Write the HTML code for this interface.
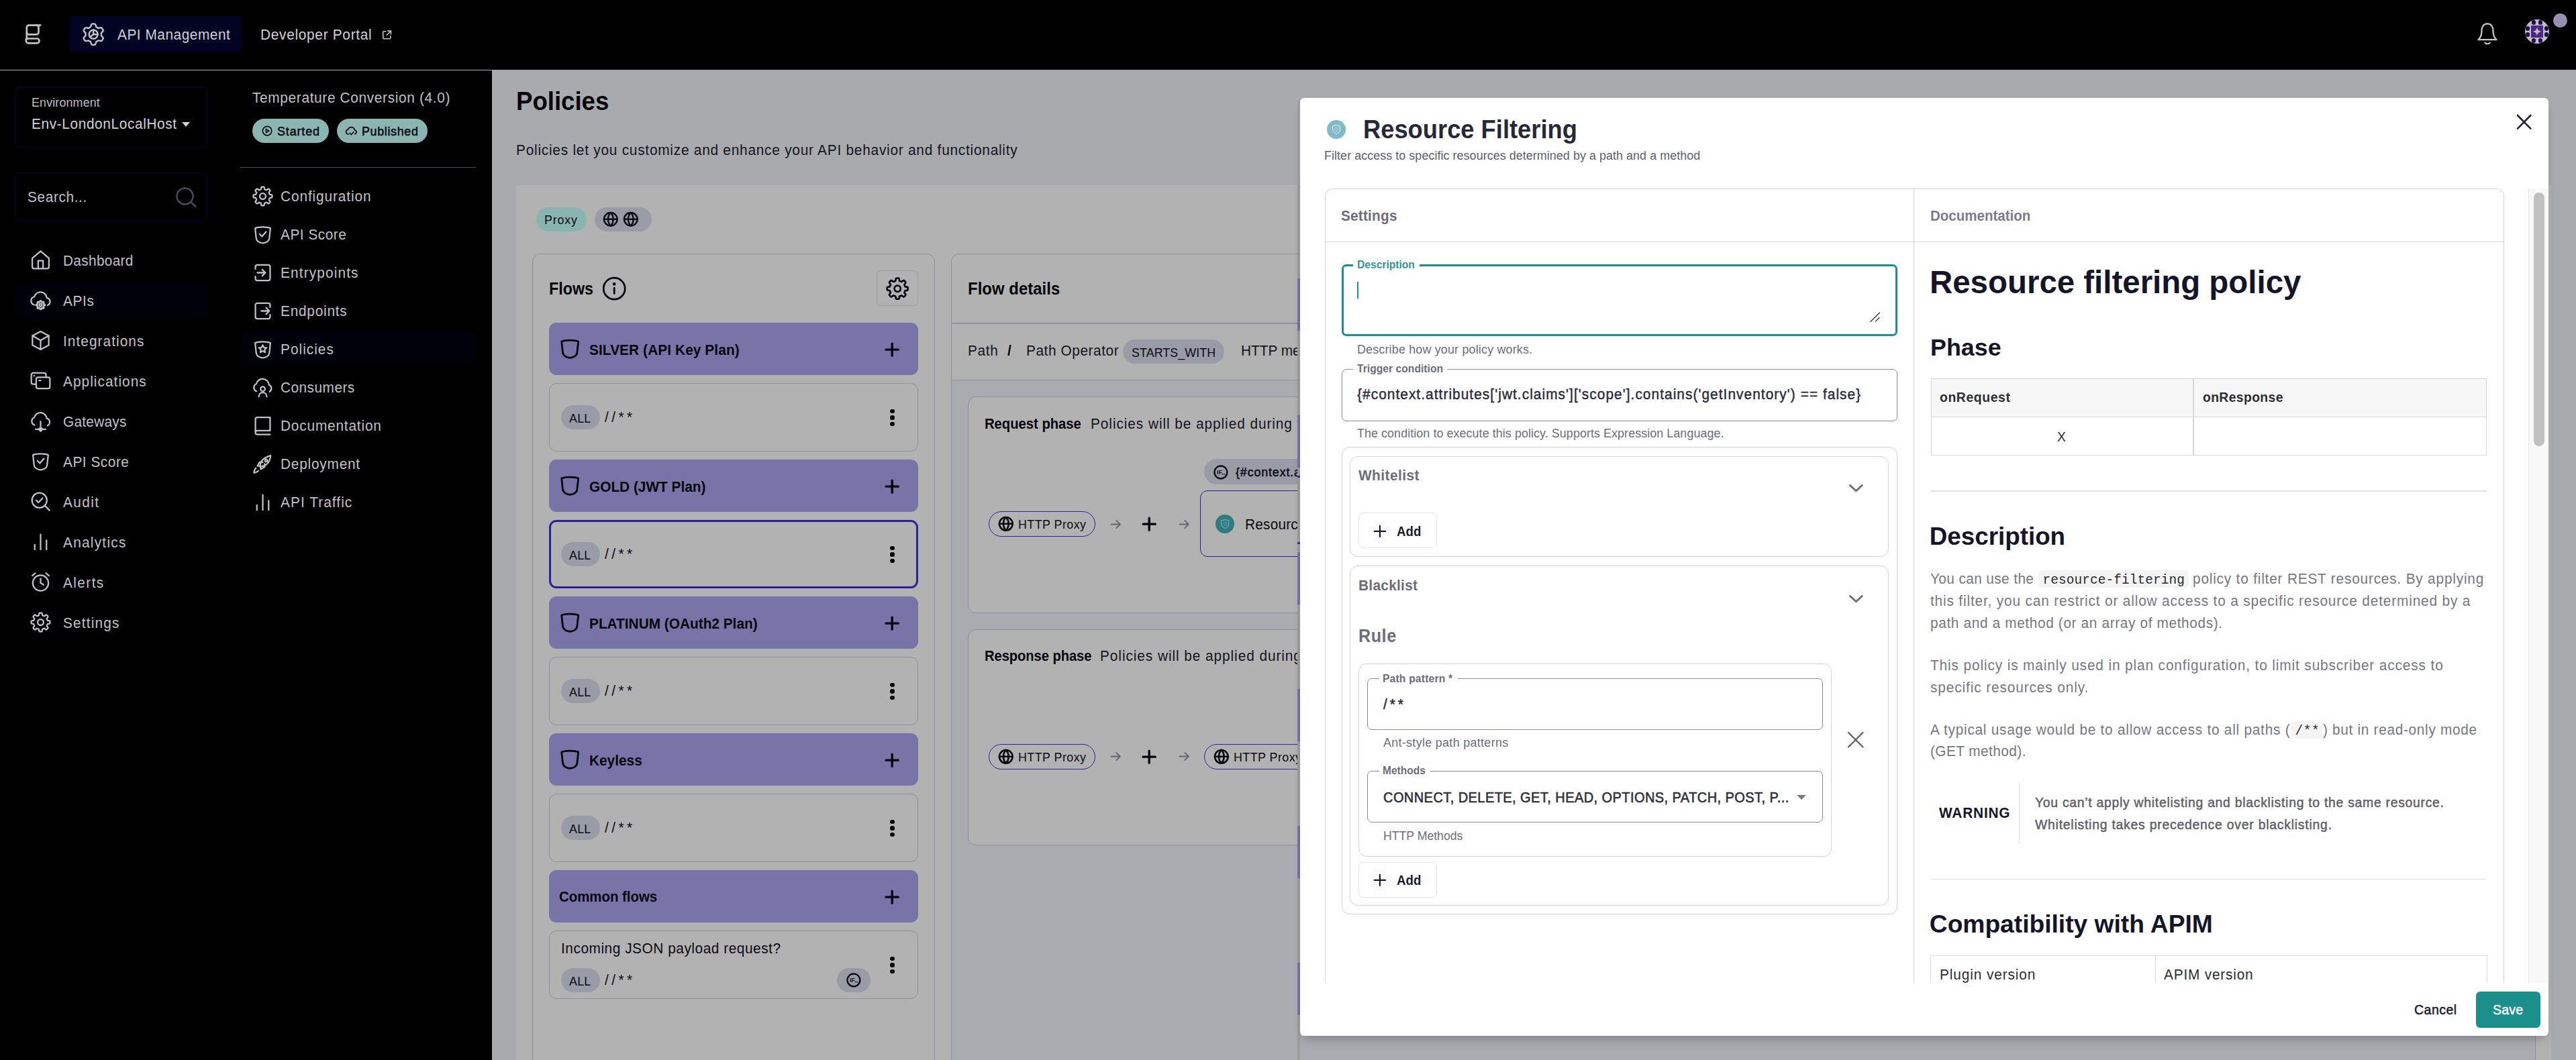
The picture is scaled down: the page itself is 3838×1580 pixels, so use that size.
<!DOCTYPE html>
<html lang="en"><head><meta charset="utf-8"><title>Policies</title><style>html,body{margin:0;padding:0}body{width:3838px;height:1580px;overflow:hidden;position:relative;background:#a9aaae;font-family:"Liberation Sans",sans-serif}
body div,body svg,body span.t{position:absolute;box-sizing:border-box}
span.t{white-space:pre;transform-origin:0 50%}
svg{overflow:visible}</style></head><body>
<div style="left:0.0px;top:0.0px;width:3838.0px;height:1580.0px;background:#a9aaae"></div>
<div style="left:768.9px;top:275.9px;width:3032.5px;height:1400.0px;background:#b2b2b2"></div>
<div style="left:0.0px;top:0.0px;width:3838.0px;height:104.0px;background:#000;border-bottom:1px solid #03031a"></div>
<svg style="left:30.0px;top:30.0px;width:40.0px;height:40.0px;" viewBox="0 0 40 40" fill="none" stroke="#c2c2c6" stroke-width="2.7" stroke-linecap="round" stroke-linejoin="round"><rect x="9.800" y="7.600" width="17.700" height="13.700" rx="3.200"/><path d="M24 7.600h6.200M9.800 18v7.500c0 1.200-.4 2-1 2.600"/><rect x="8.800" y="27.500" width="19.700" height="6.900" rx="3.450"/></svg>
<div style="left:103.3px;top:24.3px;width:257.7px;height:53.5px;background:#020222;border-radius:7px"></div>
<svg style="left:119.8px;top:31.7px;width:38.4px;height:38.4px;" viewBox="0 0 24 24" fill="none" stroke="#c4c4c8" stroke-width="1.5" stroke-linecap="round" stroke-linejoin="round"><path d="M19.30 12.00 L19.29 12.32 L19.27 12.64 L19.24 12.95 L19.44 13.31 L19.84 13.74 L20.26 14.21 L20.65 14.73 L20.97 15.27 L21.05 15.75 L20.88 16.14 L20.69 16.53 L20.49 16.90 L20.27 17.27 L20.03 17.62 L19.77 17.97 L19.32 18.14 L18.69 18.13 L18.05 18.05 L17.43 17.92 L16.85 17.78 L16.44 17.79 L16.19 17.98 L15.92 18.16 L15.65 18.32 L15.37 18.48 L15.09 18.62 L14.79 18.74 L14.58 19.09 L14.42 19.66 L14.21 20.26 L13.96 20.85 L13.66 21.40 L13.28 21.72 L12.85 21.76 L12.43 21.79 L12.00 21.80 L11.57 21.79 L11.15 21.76 L10.72 21.72 L10.34 21.40 L10.04 20.85 L9.79 20.26 L9.58 19.66 L9.42 19.09 L9.21 18.74 L8.91 18.62 L8.63 18.48 L8.35 18.32 L8.08 18.16 L7.81 17.98 L7.56 17.79 L7.15 17.78 L6.57 17.92 L5.95 18.05 L5.31 18.13 L4.68 18.14 L4.23 17.97 L3.97 17.62 L3.73 17.27 L3.51 16.90 L3.31 16.53 L3.12 16.14 L2.95 15.75 L3.03 15.27 L3.35 14.73 L3.74 14.21 L4.16 13.74 L4.56 13.31 L4.76 12.95 L4.73 12.64 L4.71 12.32 L4.70 12.00 L4.71 11.68 L4.73 11.36 L4.76 11.05 L4.56 10.69 L4.16 10.26 L3.74 9.79 L3.35 9.27 L3.03 8.73 L2.95 8.25 L3.12 7.86 L3.31 7.47 L3.51 7.10 L3.73 6.73 L3.97 6.38 L4.23 6.03 L4.68 5.86 L5.31 5.87 L5.95 5.95 L6.57 6.08 L7.15 6.22 L7.56 6.21 L7.81 6.02 L8.08 5.84 L8.35 5.68 L8.63 5.52 L8.91 5.38 L9.21 5.26 L9.42 4.91 L9.58 4.34 L9.79 3.74 L10.04 3.15 L10.34 2.60 L10.72 2.28 L11.15 2.24 L11.57 2.21 L12.00 2.20 L12.43 2.21 L12.85 2.24 L13.28 2.28 L13.66 2.60 L13.96 3.15 L14.21 3.74 L14.42 4.34 L14.58 4.91 L14.79 5.26 L15.09 5.38 L15.37 5.52 L15.65 5.68 L15.92 5.84 L16.19 6.02 L16.44 6.21 L16.85 6.22 L17.43 6.08 L18.05 5.95 L18.69 5.87 L19.32 5.86 L19.77 6.03 L20.03 6.38 L20.27 6.73 L20.49 7.10 L20.69 7.47 L20.88 7.86 L21.05 8.25 L20.97 8.73 L20.65 9.27 L20.26 9.79 L19.84 10.26 L19.44 10.69 L19.24 11.05 L19.27 11.36 L19.29 11.68Z"/><circle cx="12" cy="12" r="4.100"/><path d="M12 12V7.900M12 12l-3.300 2.600M12 12h4.100"/></svg>
<span class="t" style="left:175.0px;top:37.2px;font:400 22.4px/30px 'Liberation Sans', sans-serif;color:#d0d0d6;letter-spacing:0.57px;transform:scaleX(0.930);">API Management</span>
<span class="t" style="left:388.2px;top:37.2px;font:400 22.4px/30px 'Liberation Sans', sans-serif;color:#d0d0d6;letter-spacing:0.76px;transform:scaleX(0.930);">Developer Portal</span>
<svg style="left:568.0px;top:44.0px;width:16.5px;height:16.5px;" viewBox="0 0 24 24" fill="none" stroke="#c0c0c6" stroke-width="2.4" stroke-linecap="round" stroke-linejoin="round"><path d="M10 4H6a2 2 0 0 0-2 2v12a2 2 0 0 0 2 2h12a2 2 0 0 0 2-2v-4M14 3h7v7M21 3l-9 9"/></svg>
<svg style="left:3690.9px;top:34.4px;width:30.0px;height:33.0px;" viewBox="0 0 30 33" fill="none" stroke="#c4c4c8" stroke-width="2.3" stroke-linecap="round" stroke-linejoin="round"><path d="M1.500 25.200C5 22 6.500 18 6.500 11.500 6.500 5.200 10 1.300 15 1.300s8.500 3.900 8.500 10.200c0 6.500 1.500 10.500 5 13.700zM11.300 29.600c1.700 2.300 5.700 2.300 7.400 0"/></svg>
<div style="left:3762.0px;top:29.0px;width:36.0px;height:36.0px;background:#bdbdc0;border-radius:50%;overflow:hidden"><div style="left:9px;top:9px;width:18px;height:18px;background:#4f2583"></div><div style="left:10px;top:1px;width:6px;height:7px;border-radius:3px;background:#1e0b52"></div><div style="left:20px;top:1px;width:6px;height:7px;border-radius:3px;background:#1e0b52"></div><div style="left:10px;top:28px;width:6px;height:7px;border-radius:3px;background:#1e0b52"></div><div style="left:20px;top:28px;width:6px;height:7px;border-radius:3px;background:#1e0b52"></div><div style="left:1px;top:10px;width:6px;height:7px;border-radius:3px;background:#1e0b52"></div><div style="left:1px;top:19px;width:6px;height:7px;border-radius:3px;background:#1e0b52"></div><div style="left:29px;top:10px;width:6px;height:7px;border-radius:3px;background:#1e0b52"></div><div style="left:29px;top:19px;width:6px;height:7px;border-radius:3px;background:#1e0b52"></div><svg style="left:10px;top:10px;width:16px;height:16px" viewBox="0 0 16 16"><path d="M8 1C8.600 5.500 10.500 7.400 15 8 10.500 8.600 8.600 10.500 8 15 7.400 10.500 5.500 8.600 1 8 5.500 7.400 7.400 5.500 8 1z" fill="#bdbdc0" stroke="none"/></svg></div>
<div style="left:3804.0px;top:19.8px;width:21.2px;height:21.2px;background:#9790ae;border-radius:50%"></div>
<div style="left:0.0px;top:105.0px;width:733.0px;height:1475.0px;background:#000"></div>
<div style="left:22.4px;top:129.2px;width:287.0px;height:91.4px;border:2.4px solid #040420;border-radius:8px;background:#000"></div>
<span class="t" style="left:46.8px;top:139.7px;font:400 19.2px/25px 'Liberation Sans', sans-serif;color:#bcbcc4;letter-spacing:0.17px;transform:scaleX(0.930);">Environment</span>
<span class="t" style="left:46.7px;top:169.5px;font:400 22.4px/30px 'Liberation Sans', sans-serif;color:#d0d0d6;letter-spacing:0.67px;transform:scaleX(0.930);">Env-LondonLocalHost</span>
<div style="left:271.400px;top:181.500px;width:0;height:0;border-left:6.700px solid transparent;border-right:6.700px solid transparent;border-top:7.200px solid #d0d0d6"></div>
<div style="left:22.4px;top:257.2px;width:287.0px;height:72.6px;border:2.4px solid #040420;border-radius:8px;background:#000"></div>
<span class="t" style="left:41.1px;top:279.4px;font:400 22.4px/30px 'Liberation Sans', sans-serif;color:#c0c0c8;letter-spacing:0.66px;transform:scaleX(0.930);">Search...</span>
<svg style="left:261.0px;top:278.0px;width:32.0px;height:32.0px;" viewBox="0 0 32 32" fill="none" stroke="#474855" stroke-width="2.6" stroke-linecap="round" stroke-linejoin="round"><circle cx="14.500" cy="14.500" r="12"/><path d="M23.200 23.200 30.300 29.800"/></svg>
<div style="left:23.3px;top:421.8px;width:286.4px;height:52.0px;background:#010109;border-radius:7px"></div>
<svg style="left:43.2px;top:370.4px;width:35.0px;height:35.0px;" viewBox="0 0 24 24" fill="none" stroke="#c0c0c6" stroke-width="1.55" stroke-linecap="round" stroke-linejoin="round"><path d="M3.5 10.2 12 3l8.5 7.2V19a1.8 1.8 0 0 1-1.8 1.8H5.3A1.8 1.8 0 0 1 3.5 19z"/><path d="M9.5 20.8v-8h5v8"/></svg>
<span class="t" style="left:94.0px;top:374.1px;font:400 22.4px/30px 'Liberation Sans', sans-serif;color:#c0c0c6;letter-spacing:0.34px;transform:scaleX(0.930);">Dashboard</span>
<svg style="left:43.2px;top:430.4px;width:35.0px;height:35.0px;" viewBox="0 0 24 24" fill="none" stroke="#c0c0c6" stroke-width="1.55" stroke-linecap="round" stroke-linejoin="round"><path d="M5.8 16.8a4.3 4.3 0 0 1-.2-8.4A6.5 6.5 0 0 1 18.3 9.5a4 4 0 0 1 .9 7.6"/><path d="M16.40 17.00 L16.39 17.29 L16.36 17.57 L15.73 17.74 L15.09 17.83 L15.03 18.03 L14.96 18.22 L14.87 18.42 L14.77 18.60 L15.16 19.11 L15.49 19.68 L15.31 19.90 L15.11 20.11 L14.90 20.31 L14.68 20.49 L14.11 20.16 L13.60 19.77 L13.42 19.87 L13.22 19.96 L13.03 20.03 L12.83 20.09 L12.74 20.73 L12.57 21.36 L12.29 21.39 L12.00 21.40 L11.71 21.39 L11.43 21.36 L11.26 20.73 L11.17 20.09 L10.97 20.03 L10.78 19.96 L10.58 19.87 L10.40 19.77 L9.89 20.16 L9.32 20.49 L9.10 20.31 L8.89 20.11 L8.69 19.90 L8.51 19.68 L8.84 19.11 L9.23 18.60 L9.13 18.42 L9.04 18.22 L8.97 18.03 L8.91 17.83 L8.27 17.74 L7.64 17.57 L7.61 17.29 L7.60 17.00 L7.61 16.71 L7.64 16.43 L8.27 16.26 L8.91 16.17 L8.97 15.97 L9.04 15.78 L9.13 15.58 L9.23 15.40 L8.84 14.89 L8.51 14.32 L8.69 14.10 L8.89 13.89 L9.10 13.69 L9.32 13.51 L9.89 13.84 L10.40 14.23 L10.58 14.13 L10.78 14.04 L10.97 13.97 L11.17 13.91 L11.26 13.27 L11.43 12.64 L11.71 12.61 L12.00 12.60 L12.29 12.61 L12.57 12.64 L12.74 13.27 L12.83 13.91 L13.03 13.97 L13.22 14.04 L13.42 14.13 L13.60 14.23 L14.11 13.84 L14.68 13.51 L14.90 13.69 L15.11 13.89 L15.31 14.10 L15.49 14.32 L15.16 14.89 L14.77 15.40 L14.87 15.58 L14.96 15.78 L15.03 15.97 L15.09 16.17 L15.73 16.26 L16.36 16.43 L16.39 16.71Z"/><circle cx="12" cy="17" r="1.3"/></svg>
<span class="t" style="left:94.0px;top:434.1px;font:400 22.4px/30px 'Liberation Sans', sans-serif;color:#c0c0c6;letter-spacing:0.70px;transform:scaleX(0.930);">APIs</span>
<svg style="left:43.2px;top:490.4px;width:35.0px;height:35.0px;" viewBox="0 0 24 24" fill="none" stroke="#c0c0c6" stroke-width="1.55" stroke-linecap="round" stroke-linejoin="round"><path d="M12 2.8 20.3 7.2v9.6L12 21.2 3.7 16.8V7.2z"/><path d="M3.7 7.2 12 11.8l8.3-4.6M12 11.8v9.4"/></svg>
<span class="t" style="left:94.0px;top:494.1px;font:400 22.4px/30px 'Liberation Sans', sans-serif;color:#c0c0c6;letter-spacing:1.13px;transform:scaleX(0.930);">Integrations</span>
<svg style="left:43.2px;top:550.4px;width:35.0px;height:35.0px;" viewBox="0 0 24 24" fill="none" stroke="#c0c0c6" stroke-width="1.55" stroke-linecap="round" stroke-linejoin="round"><rect x="7.5" y="8.5" width="14" height="11.5" rx="2"/><path d="M17.5 8.5V6a2 2 0 0 0-2-2h-11a2 2 0 0 0-2 2v7.5a2 2 0 0 0 2 2h3"/><path d="M10.5 11.8h1.5M5.2 7h.3"/></svg>
<span class="t" style="left:94.0px;top:554.1px;font:400 22.4px/30px 'Liberation Sans', sans-serif;color:#c0c0c6;letter-spacing:1.12px;transform:scaleX(0.930);">Applications</span>
<svg style="left:43.2px;top:610.4px;width:35.0px;height:35.0px;" viewBox="0 0 24 24" fill="none" stroke="#c0c0c6" stroke-width="1.55" stroke-linecap="round" stroke-linejoin="round"><path d="M5.8 16.2a4.3 4.3 0 0 1-.2-8A6.5 6.5 0 0 1 18.3 9.3a4 4 0 0 1 .9 7.4"/><path d="M12 12.5v6M7 20.5h10M12 18.5l2 2-2 2-2-2z"/></svg>
<span class="t" style="left:94.0px;top:614.1px;font:400 22.4px/30px 'Liberation Sans', sans-serif;color:#c0c0c6;letter-spacing:0.28px;transform:scaleX(0.930);">Gateways</span>
<svg style="left:43.2px;top:670.4px;width:35.0px;height:35.0px;" viewBox="0 0 24 24" fill="none" stroke="#c0c0c6" stroke-width="1.55" stroke-linecap="round" stroke-linejoin="round"><path d="M4.2 5.6c3.2-1.6 12.4-1.6 15.6 0l-1.1 10.2c-.4 3.2-3.6 5-6.7 5s-6.3-1.8-6.7-5z"/><path d="M8.8 11.5l2.4 2.6 4.2-4.8"/></svg>
<span class="t" style="left:94.0px;top:674.1px;font:400 22.4px/30px 'Liberation Sans', sans-serif;color:#c0c0c6;letter-spacing:0.56px;transform:scaleX(0.930);">API Score</span>
<svg style="left:43.2px;top:730.4px;width:35.0px;height:35.0px;" viewBox="0 0 24 24" fill="none" stroke="#c0c0c6" stroke-width="1.55" stroke-linecap="round" stroke-linejoin="round"><circle cx="10.8" cy="10.8" r="7.6"/><path d="M16.4 16.4 21 21M7.6 10.8l2.2 2.2 4.2-4.4"/></svg>
<span class="t" style="left:94.0px;top:734.1px;font:400 22.4px/30px 'Liberation Sans', sans-serif;color:#c0c0c6;letter-spacing:1.50px;transform:scaleX(0.930);">Audit</span>
<svg style="left:43.2px;top:790.4px;width:35.0px;height:35.0px;" viewBox="0 0 24 24" fill="none" stroke="#c0c0c6" stroke-width="1.55" stroke-linecap="round" stroke-linejoin="round"><path d="M6 20v-5M12 20V4.5M18 20v-9.5"/></svg>
<span class="t" style="left:94.0px;top:794.1px;font:400 22.4px/30px 'Liberation Sans', sans-serif;color:#c0c0c6;letter-spacing:1.35px;transform:scaleX(0.930);">Analytics</span>
<svg style="left:43.2px;top:850.4px;width:35.0px;height:35.0px;" viewBox="0 0 24 24" fill="none" stroke="#c0c0c6" stroke-width="1.55" stroke-linecap="round" stroke-linejoin="round"><circle cx="12" cy="13" r="8"/><path d="M12 8.5V13l3 1.8M3.5 5.5 6.5 3M20.5 5.5 17.5 3"/></svg>
<span class="t" style="left:94.0px;top:854.1px;font:400 22.4px/30px 'Liberation Sans', sans-serif;color:#c0c0c6;letter-spacing:1.51px;transform:scaleX(0.930);">Alerts</span>
<svg style="left:43.2px;top:910.4px;width:35.0px;height:35.0px;" viewBox="0 0 24 24" fill="none" stroke="#c0c0c6" stroke-width="1.55" stroke-linecap="round" stroke-linejoin="round"><path d="M21.60 12.00 L21.59 12.47 L21.55 12.94 L21.31 13.38 L20.24 13.64 L19.17 13.80 L18.89 14.09 L18.78 14.43 L18.65 14.76 L18.51 15.08 L18.35 15.39 L18.34 15.80 L18.98 16.67 L19.56 17.61 L19.42 18.09 L19.11 18.45 L18.79 18.79 L18.45 19.11 L18.09 19.42 L17.61 19.56 L16.67 18.98 L15.80 18.34 L15.39 18.35 L15.08 18.51 L14.76 18.65 L14.43 18.78 L14.09 18.89 L13.80 19.17 L13.64 20.24 L13.38 21.31 L12.94 21.55 L12.47 21.59 L12.00 21.60 L11.53 21.59 L11.06 21.55 L10.62 21.31 L10.36 20.24 L10.20 19.17 L9.91 18.89 L9.57 18.78 L9.24 18.65 L8.92 18.51 L8.61 18.35 L8.20 18.34 L7.33 18.98 L6.39 19.56 L5.91 19.42 L5.55 19.11 L5.21 18.79 L4.89 18.45 L4.58 18.09 L4.44 17.61 L5.02 16.67 L5.66 15.80 L5.65 15.39 L5.49 15.08 L5.35 14.76 L5.22 14.43 L5.11 14.09 L4.83 13.80 L3.76 13.64 L2.69 13.38 L2.45 12.94 L2.41 12.47 L2.40 12.00 L2.41 11.53 L2.45 11.06 L2.69 10.62 L3.76 10.36 L4.83 10.20 L5.11 9.91 L5.22 9.57 L5.35 9.24 L5.49 8.92 L5.65 8.61 L5.66 8.20 L5.02 7.33 L4.44 6.39 L4.58 5.91 L4.89 5.55 L5.21 5.21 L5.55 4.89 L5.91 4.58 L6.39 4.44 L7.33 5.02 L8.20 5.66 L8.61 5.65 L8.92 5.49 L9.24 5.35 L9.57 5.22 L9.91 5.11 L10.20 4.83 L10.36 3.76 L10.62 2.69 L11.06 2.45 L11.53 2.41 L12.00 2.40 L12.47 2.41 L12.94 2.45 L13.38 2.69 L13.64 3.76 L13.80 4.83 L14.09 5.11 L14.43 5.22 L14.76 5.35 L15.08 5.49 L15.39 5.65 L15.80 5.66 L16.67 5.02 L17.61 4.44 L18.09 4.58 L18.45 4.89 L18.79 5.21 L19.11 5.55 L19.42 5.91 L19.56 6.39 L18.98 7.33 L18.34 8.20 L18.35 8.61 L18.51 8.92 L18.65 9.24 L18.78 9.57 L18.89 9.91 L19.17 10.20 L20.24 10.36 L21.31 10.62 L21.55 11.06 L21.59 11.53Z"/><circle cx="12" cy="12" r="3.0"/></svg>
<span class="t" style="left:94.0px;top:914.1px;font:400 22.4px/30px 'Liberation Sans', sans-serif;color:#c0c0c6;letter-spacing:1.26px;transform:scaleX(0.930);">Settings</span>
<span class="t" style="left:375.8px;top:131.3px;font:400 22.4px/30px 'Liberation Sans', sans-serif;color:#c0c0c6;letter-spacing:0.71px;transform:scaleX(0.930);">Temperature Conversion (4.0)</span>
<div style="left:376.0px;top:177.1px;width:114.0px;height:35.8px;background:#8ab5b1;border-radius:18px"></div>
<svg style="left:389.7px;top:186.9px;width:16.2px;height:16.2px;" viewBox="0 0 24 24" fill="none" stroke="#0b0b14" stroke-width="2.4" stroke-linecap="round" stroke-linejoin="round"><circle cx="12" cy="12" r="10"/><path d="M9.500 8v8l6.500-4z"/></svg>
<span class="t" style="left:412.9px;top:183.3px;font:400 19.2px/25px 'Liberation Sans', sans-serif;color:#0b0b14;letter-spacing:0.97px;transform:scaleX(0.930);-webkit-text-stroke:.6px #0b0b14;">Started</span>
<div style="left:501.8px;top:177.1px;width:135.1px;height:35.8px;background:#8ab5b1;border-radius:18px"></div>
<svg style="left:513.6px;top:185.9px;width:18.7px;height:18.7px;" viewBox="0 0 24 24" fill="none" stroke="#0b0b14" stroke-width="2.2" stroke-linecap="round" stroke-linejoin="round"><path d="M7 18h-.500a4.500 4.500 0 0 1-.600-8.960A6.500 6.500 0 0 1 18.500 10 4 4 0 0 1 19 17.800M9.500 16l2.500 3 4.500-5"/></svg>
<span class="t" style="left:538.7px;top:183.3px;font:400 19.2px/25px 'Liberation Sans', sans-serif;color:#0b0b14;letter-spacing:0.74px;transform:scaleX(0.930);-webkit-text-stroke:.6px #0b0b14;">Published</span>
<div style="left:358.0px;top:248.5px;width:351.1px;height:1.6px;background:#4a4b58"></div>
<div style="left:358.6px;top:493.4px;width:350.5px;height:52.0px;background:#010109;border-radius:7px"></div>
<svg style="left:373.5px;top:274.5px;width:35.0px;height:35.0px;" viewBox="0 0 24 24" fill="none" stroke="#c0c0c6" stroke-width="1.55" stroke-linecap="round" stroke-linejoin="round"><path d="M21.60 12.00 L21.59 12.47 L21.55 12.94 L21.31 13.38 L20.24 13.64 L19.17 13.80 L18.89 14.09 L18.78 14.43 L18.65 14.76 L18.51 15.08 L18.35 15.39 L18.34 15.80 L18.98 16.67 L19.56 17.61 L19.42 18.09 L19.11 18.45 L18.79 18.79 L18.45 19.11 L18.09 19.42 L17.61 19.56 L16.67 18.98 L15.80 18.34 L15.39 18.35 L15.08 18.51 L14.76 18.65 L14.43 18.78 L14.09 18.89 L13.80 19.17 L13.64 20.24 L13.38 21.31 L12.94 21.55 L12.47 21.59 L12.00 21.60 L11.53 21.59 L11.06 21.55 L10.62 21.31 L10.36 20.24 L10.20 19.17 L9.91 18.89 L9.57 18.78 L9.24 18.65 L8.92 18.51 L8.61 18.35 L8.20 18.34 L7.33 18.98 L6.39 19.56 L5.91 19.42 L5.55 19.11 L5.21 18.79 L4.89 18.45 L4.58 18.09 L4.44 17.61 L5.02 16.67 L5.66 15.80 L5.65 15.39 L5.49 15.08 L5.35 14.76 L5.22 14.43 L5.11 14.09 L4.83 13.80 L3.76 13.64 L2.69 13.38 L2.45 12.94 L2.41 12.47 L2.40 12.00 L2.41 11.53 L2.45 11.06 L2.69 10.62 L3.76 10.36 L4.83 10.20 L5.11 9.91 L5.22 9.57 L5.35 9.24 L5.49 8.92 L5.65 8.61 L5.66 8.20 L5.02 7.33 L4.44 6.39 L4.58 5.91 L4.89 5.55 L5.21 5.21 L5.55 4.89 L5.91 4.58 L6.39 4.44 L7.33 5.02 L8.20 5.66 L8.61 5.65 L8.92 5.49 L9.24 5.35 L9.57 5.22 L9.91 5.11 L10.20 4.83 L10.36 3.76 L10.62 2.69 L11.06 2.45 L11.53 2.41 L12.00 2.40 L12.47 2.41 L12.94 2.45 L13.38 2.69 L13.64 3.76 L13.80 4.83 L14.09 5.11 L14.43 5.22 L14.76 5.35 L15.08 5.49 L15.39 5.65 L15.80 5.66 L16.67 5.02 L17.61 4.44 L18.09 4.58 L18.45 4.89 L18.79 5.21 L19.11 5.55 L19.42 5.91 L19.56 6.39 L18.98 7.33 L18.34 8.20 L18.35 8.61 L18.51 8.92 L18.65 9.24 L18.78 9.57 L18.89 9.91 L19.17 10.20 L20.24 10.36 L21.31 10.62 L21.55 11.06 L21.59 11.53Z"/><circle cx="12" cy="12" r="3.0"/></svg>
<span class="t" style="left:417.8px;top:277.9px;font:400 22.4px/30px 'Liberation Sans', sans-serif;color:#c0c0c6;letter-spacing:0.96px;transform:scaleX(0.930);">Configuration</span>
<svg style="left:373.5px;top:331.5px;width:35.0px;height:35.0px;" viewBox="0 0 24 24" fill="none" stroke="#c0c0c6" stroke-width="1.55" stroke-linecap="round" stroke-linejoin="round"><path d="M4.2 5.6c3.2-1.6 12.4-1.6 15.6 0l-1.1 10.2c-.4 3.2-3.6 5-6.7 5s-6.3-1.8-6.7-5z"/><path d="M8.8 11.5l2.4 2.6 4.2-4.8"/></svg>
<span class="t" style="left:417.8px;top:334.9px;font:400 22.4px/30px 'Liberation Sans', sans-serif;color:#c0c0c6;letter-spacing:0.55px;transform:scaleX(0.930);">API Score</span>
<svg style="left:373.5px;top:388.5px;width:35.0px;height:35.0px;" viewBox="0 0 24 24" fill="none" stroke="#c0c0c6" stroke-width="1.55" stroke-linecap="round" stroke-linejoin="round"><path d="M4.500 8.200V6a2 2 0 0 1 2-2h11a2 2 0 0 1 2 2v12a2 2 0 0 1-2 2h-11a2 2 0 0 1-2-2v-2.200"/><path d="M6.500 12h8M11.500 8.800l3.200 3.200-3.200 3.200"/></svg>
<span class="t" style="left:417.8px;top:391.9px;font:400 22.4px/30px 'Liberation Sans', sans-serif;color:#c0c0c6;letter-spacing:1.22px;transform:scaleX(0.930);">Entrypoints</span>
<svg style="left:373.5px;top:445.5px;width:35.0px;height:35.0px;" viewBox="0 0 24 24" fill="none" stroke="#c0c0c6" stroke-width="1.55" stroke-linecap="round" stroke-linejoin="round"><path d="M19.500 8.200V6a2 2 0 0 0-2-2h-11a2 2 0 0 0-2 2v12a2 2 0 0 0 2 2h11a2 2 0 0 0 2-2v-2.200"/><path d="M10.500 12h8M15.500 8.800l3.200 3.200-3.200 3.200"/></svg>
<span class="t" style="left:417.8px;top:448.9px;font:400 22.4px/30px 'Liberation Sans', sans-serif;color:#c0c0c6;letter-spacing:0.82px;transform:scaleX(0.930);">Endpoints</span>
<svg style="left:373.5px;top:502.5px;width:35.0px;height:35.0px;" viewBox="0 0 24 24" fill="none" stroke="#c0c0c6" stroke-width="1.55" stroke-linecap="round" stroke-linejoin="round"><path d="M4.2 5.6c3.2-1.6 12.4-1.6 15.6 0l-1.1 10.2c-.4 3.2-3.6 5-6.7 5s-6.3-1.8-6.7-5z"/><path d="M12 7.8l1.200 2.500 2.700.300-2 1.900.600 2.700L12 13.800l-2.500 1.400.600-2.700-2-1.900 2.700-.300z"/></svg>
<span class="t" style="left:417.8px;top:505.9px;font:400 22.4px/30px 'Liberation Sans', sans-serif;color:#c0c0c6;letter-spacing:1.09px;transform:scaleX(0.930);">Policies</span>
<svg style="left:373.5px;top:559.5px;width:35.0px;height:35.0px;" viewBox="0 0 24 24" fill="none" stroke="#c0c0c6" stroke-width="1.55" stroke-linecap="round" stroke-linejoin="round"><path d="M5.500 16a4.300 4.300 0 0 1 0-7.800A6.500 6.500 0 0 1 18.300 9.300a4 4 0 0 1 .700 7"/><circle cx="12" cy="13.500" r="2.300"/><path d="M8 21.500c0-2.700 1.800-4.200 4-4.200s4 1.500 4 4.200"/></svg>
<span class="t" style="left:417.8px;top:562.9px;font:400 22.4px/30px 'Liberation Sans', sans-serif;color:#c0c0c6;letter-spacing:0.51px;transform:scaleX(0.930);">Consumers</span>
<svg style="left:373.5px;top:616.5px;width:35.0px;height:35.0px;" viewBox="0 0 24 24" fill="none" stroke="#c0c0c6" stroke-width="1.55" stroke-linecap="round" stroke-linejoin="round"><path d="M4.500 18.500V5.500a2 2 0 0 1 2-2h13v13.500h-13a2 2 0 0 0 0 4h13"/></svg>
<span class="t" style="left:417.8px;top:619.9px;font:400 22.4px/30px 'Liberation Sans', sans-serif;color:#c0c0c6;letter-spacing:0.88px;transform:scaleX(0.930);">Documentation</span>
<svg style="left:373.5px;top:673.5px;width:35.0px;height:35.0px;" viewBox="0 0 24 24" fill="none" stroke="#c0c0c6" stroke-width="1.55" stroke-linecap="round" stroke-linejoin="round"><path d="M9.500 14.500c-.500-3.500 2-9 10.500-11-.800 8-6 11.500-10.500 11zM9.500 14.500l-3-.500 2.500-4 3 .200M9.500 14.500l.500 3 4-2.500-.200-3M5 16.500c-1.500 1-2 4-2 4.500 .500 0 3.500-.500 4.500-2"/><circle cx="15.500" cy="8.500" r="1.200"/></svg>
<span class="t" style="left:417.8px;top:676.9px;font:400 22.4px/30px 'Liberation Sans', sans-serif;color:#c0c0c6;letter-spacing:0.84px;transform:scaleX(0.930);">Deployment</span>
<svg style="left:373.5px;top:730.5px;width:35.0px;height:35.0px;" viewBox="0 0 24 24" fill="none" stroke="#c0c0c6" stroke-width="1.55" stroke-linecap="round" stroke-linejoin="round"><path d="M6 20v-5M12 20V4.5M18 20v-9.5"/></svg>
<span class="t" style="left:417.8px;top:733.9px;font:400 22.4px/30px 'Liberation Sans', sans-serif;color:#c0c0c6;letter-spacing:1.14px;transform:scaleX(0.930);">API Traffic</span>
<span class="t" style="left:769.0px;top:125.9px;font:700 38.4px/50px 'Liberation Sans', sans-serif;color:#05050c;transform:scaleX(0.953);">Policies</span>
<span class="t" style="left:768.9px;top:208.8px;font:400 22.4px/30px 'Liberation Sans', sans-serif;color:#14141f;letter-spacing:0.82px;transform:scaleX(0.930);">Policies let you customize and enhance your API behavior and functionality</span>
<div style="left:799.1px;top:309.2px;width:74.7px;height:35.8px;background:#89b5b1;border-radius:18px"></div>
<span class="t" style="left:811.4px;top:315.1px;font:400 19.2px/25px 'Liberation Sans', sans-serif;color:#0b0b14;letter-spacing:0.92px;transform:scaleX(0.930);">Proxy</span>
<div style="left:886.0px;top:309.2px;width:84.9px;height:35.8px;background:#999ba6;border-radius:18px"></div>
<svg style="left:897.1px;top:314.2px;width:25.6px;height:25.6px;" viewBox="0 0 24 24" fill="none" stroke="#0b0b14" stroke-width="2.3" stroke-linecap="round" stroke-linejoin="round"><circle cx="12" cy="12" r="9.200"/><path d="M2.800 12h18.400M12 2.800c-4.800 5-4.800 13.400 0 18.400M12 2.800c4.800 5 4.800 13.400 0 18.400"/></svg>
<svg style="left:927.3px;top:314.2px;width:25.6px;height:25.6px;" viewBox="0 0 24 24" fill="none" stroke="#0b0b14" stroke-width="2.3" stroke-linecap="round" stroke-linejoin="round"><circle cx="12" cy="12" r="9.200"/><path d="M2.800 12h18.400M12 2.800c-4.800 5-4.800 13.400 0 18.400M12 2.800c4.800 5 4.800 13.400 0 18.400"/></svg>
<div style="left:793.1px;top:378.4px;width:599.5px;height:1300.0px;border:1.6px solid #8e8f9b;border-radius:12px"></div>
<span class="t" style="left:817.9px;top:413.1px;font:700 25.6px/34px 'Liberation Sans', sans-serif;color:#05050c;transform:scaleX(0.909);">Flows</span>
<svg style="left:895.8px;top:410.9px;width:38.4px;height:38.4px;" viewBox="0 0 24 24" fill="none" stroke="#05050c" stroke-width="1.7" stroke-linecap="round" stroke-linejoin="round"><circle cx="12" cy="12" r="10"/><path d="M12 11.300v5.200"/><circle cx="12" cy="7.700" r=".600" fill="#000"/></svg>
<div style="left:1306.1px;top:403.3px;width:61.6px;height:53.2px;border:1.6px solid #9c9da8;border-radius:7px"></div>
<svg style="left:1318.1px;top:411.3px;width:38.4px;height:38.4px;" viewBox="0 0 24 24" fill="none" stroke="#05050c" stroke-width="1.7" stroke-linecap="round" stroke-linejoin="round"><path d="M21.70 12.00 L21.69 12.48 L21.65 12.95 L21.41 13.40 L20.34 13.66 L19.27 13.82 L18.99 14.12 L18.87 14.46 L18.74 14.79 L18.60 15.12 L18.44 15.44 L18.42 15.85 L19.07 16.72 L19.64 17.67 L19.50 18.15 L19.19 18.51 L18.86 18.86 L18.51 19.19 L18.15 19.50 L17.67 19.64 L16.72 19.07 L15.85 18.42 L15.44 18.44 L15.12 18.60 L14.79 18.74 L14.46 18.87 L14.12 18.99 L13.82 19.27 L13.66 20.34 L13.40 21.41 L12.95 21.65 L12.48 21.69 L12.00 21.70 L11.52 21.69 L11.05 21.65 L10.60 21.41 L10.34 20.34 L10.18 19.27 L9.88 18.99 L9.54 18.87 L9.21 18.74 L8.88 18.60 L8.56 18.44 L8.15 18.42 L7.28 19.07 L6.33 19.64 L5.85 19.50 L5.49 19.19 L5.14 18.86 L4.81 18.51 L4.50 18.15 L4.36 17.67 L4.93 16.72 L5.58 15.85 L5.56 15.44 L5.40 15.12 L5.26 14.79 L5.13 14.46 L5.01 14.12 L4.73 13.82 L3.66 13.66 L2.59 13.40 L2.35 12.95 L2.31 12.48 L2.30 12.00 L2.31 11.52 L2.35 11.05 L2.59 10.60 L3.66 10.34 L4.73 10.18 L5.01 9.88 L5.13 9.54 L5.26 9.21 L5.40 8.88 L5.56 8.56 L5.58 8.15 L4.93 7.28 L4.36 6.33 L4.50 5.85 L4.81 5.49 L5.14 5.14 L5.49 4.81 L5.85 4.50 L6.33 4.36 L7.28 4.93 L8.15 5.58 L8.56 5.56 L8.88 5.40 L9.21 5.26 L9.54 5.13 L9.88 5.01 L10.18 4.73 L10.34 3.66 L10.60 2.59 L11.05 2.35 L11.52 2.31 L12.00 2.30 L12.48 2.31 L12.95 2.35 L13.40 2.59 L13.66 3.66 L13.82 4.73 L14.12 5.01 L14.46 5.13 L14.79 5.26 L15.12 5.40 L15.44 5.56 L15.85 5.58 L16.72 4.93 L17.67 4.36 L18.15 4.50 L18.51 4.81 L18.86 5.14 L19.19 5.49 L19.50 5.85 L19.64 6.33 L19.07 7.28 L18.42 8.15 L18.44 8.56 L18.60 8.88 L18.74 9.21 L18.87 9.54 L18.99 9.88 L19.27 10.18 L20.34 10.34 L21.41 10.60 L21.65 11.05 L21.69 11.52Z"/><circle cx="12" cy="12" r="2.9"/></svg>
<div style="left:818.0px;top:481.1px;width:549.7px;height:77.5px;background:#7974a7;border-radius:11px"></div>
<svg style="left:830.2px;top:500.4px;width:38.4px;height:38.4px;" viewBox="0 0 24 24" fill="none" stroke="#05050c" stroke-width="1.75" stroke-linecap="round" stroke-linejoin="round"><path d="M4.2 5.6c3.2-1.6 12.4-1.6 15.6 0l-1.1 10.2c-.4 3.2-3.6 5-6.7 5s-6.3-1.8-6.7-5z"/></svg>
<span class="t" style="left:877.5px;top:506.9px;font:700 22.4px/30px 'Liberation Sans', sans-serif;color:#05050c;letter-spacing:0.10px;transform:scaleX(0.930);">SILVER (API Key Plan)</span>
<svg style="left:1310.2px;top:501.8px;width:38.4px;height:38.4px;" viewBox="0 0 24 24" fill="none" stroke="#05050c" stroke-width="2.1" stroke-linecap="round" stroke-linejoin="round"><path d="M12 6.300v11.400M6.300 12h11.400"/></svg>
<div style="left:818.0px;top:571.0px;width:549.7px;height:102.2px;border:1.6px solid #8e8f9b;border-radius:11px"></div>
<div style="left:836.0px;top:604.1px;width:57.6px;height:35.5px;background:#999ba6;border-radius:18px"></div>
<span class="t" style="left:848.3px;top:610.6px;font:400 19.2px/25px 'Liberation Sans', sans-serif;color:#0b0b14;letter-spacing:0.27px;transform:scaleX(0.930);">ALL</span>
<span class="t" style="left:900.5px;top:607.1px;font:400 22.4px/30px 'Liberation Sans', sans-serif;color:#0b0b14;letter-spacing:4.79px;transform:scaleX(0.930);">//**</span>
<div style="left:1326.2px;top:609.8px;width:6.4px;height:6.4px;background:#05050c;border-radius:50%"></div>
<div style="left:1326.2px;top:619.4px;width:6.4px;height:6.4px;background:#05050c;border-radius:50%"></div>
<div style="left:1326.2px;top:629.0px;width:6.4px;height:6.4px;background:#05050c;border-radius:50%"></div>
<div style="left:818.0px;top:685.1px;width:549.7px;height:77.5px;background:#7974a7;border-radius:11px"></div>
<svg style="left:830.2px;top:704.4px;width:38.4px;height:38.4px;" viewBox="0 0 24 24" fill="none" stroke="#05050c" stroke-width="1.75" stroke-linecap="round" stroke-linejoin="round"><path d="M4.2 5.6c3.2-1.6 12.4-1.6 15.6 0l-1.1 10.2c-.4 3.2-3.6 5-6.7 5s-6.3-1.8-6.7-5z"/></svg>
<span class="t" style="left:878.4px;top:710.9px;font:700 22.4px/30px 'Liberation Sans', sans-serif;color:#05050c;transform:scaleX(0.930);">GOLD (JWT Plan)</span>
<svg style="left:1310.2px;top:705.8px;width:38.4px;height:38.4px;" viewBox="0 0 24 24" fill="none" stroke="#05050c" stroke-width="2.1" stroke-linecap="round" stroke-linejoin="round"><path d="M12 6.300v11.400M6.300 12h11.400"/></svg>
<div style="left:818.0px;top:775.0px;width:549.7px;height:102.2px;border:3.2px solid #2c1f9b;border-radius:11px"></div>
<div style="left:836.0px;top:808.1px;width:57.6px;height:35.5px;background:#999ba6;border-radius:18px"></div>
<span class="t" style="left:848.3px;top:814.6px;font:400 19.2px/25px 'Liberation Sans', sans-serif;color:#0b0b14;letter-spacing:0.27px;transform:scaleX(0.930);">ALL</span>
<span class="t" style="left:900.5px;top:811.1px;font:400 22.4px/30px 'Liberation Sans', sans-serif;color:#0b0b14;letter-spacing:4.79px;transform:scaleX(0.930);">//**</span>
<div style="left:1326.2px;top:813.8px;width:6.4px;height:6.4px;background:#05050c;border-radius:50%"></div>
<div style="left:1326.2px;top:823.4px;width:6.4px;height:6.4px;background:#05050c;border-radius:50%"></div>
<div style="left:1326.2px;top:833.0px;width:6.4px;height:6.4px;background:#05050c;border-radius:50%"></div>
<div style="left:818.0px;top:889.1px;width:549.7px;height:77.5px;background:#7974a7;border-radius:11px"></div>
<svg style="left:830.2px;top:908.4px;width:38.4px;height:38.4px;" viewBox="0 0 24 24" fill="none" stroke="#05050c" stroke-width="1.75" stroke-linecap="round" stroke-linejoin="round"><path d="M4.2 5.6c3.2-1.6 12.4-1.6 15.6 0l-1.1 10.2c-.4 3.2-3.6 5-6.7 5s-6.3-1.8-6.7-5z"/></svg>
<span class="t" style="left:878.4px;top:914.9px;font:700 22.4px/30px 'Liberation Sans', sans-serif;color:#05050c;transform:scaleX(0.930);">PLATINUM (OAuth2 Plan)</span>
<svg style="left:1310.2px;top:909.8px;width:38.4px;height:38.4px;" viewBox="0 0 24 24" fill="none" stroke="#05050c" stroke-width="2.1" stroke-linecap="round" stroke-linejoin="round"><path d="M12 6.300v11.400M6.300 12h11.400"/></svg>
<div style="left:818.0px;top:979.0px;width:549.7px;height:102.2px;border:1.6px solid #8e8f9b;border-radius:11px"></div>
<div style="left:836.0px;top:1012.1px;width:57.6px;height:35.5px;background:#999ba6;border-radius:18px"></div>
<span class="t" style="left:848.3px;top:1018.6px;font:400 19.2px/25px 'Liberation Sans', sans-serif;color:#0b0b14;letter-spacing:0.27px;transform:scaleX(0.930);">ALL</span>
<span class="t" style="left:900.5px;top:1015.1px;font:400 22.4px/30px 'Liberation Sans', sans-serif;color:#0b0b14;letter-spacing:4.79px;transform:scaleX(0.930);">//**</span>
<div style="left:1326.2px;top:1017.8px;width:6.4px;height:6.4px;background:#05050c;border-radius:50%"></div>
<div style="left:1326.2px;top:1027.4px;width:6.4px;height:6.4px;background:#05050c;border-radius:50%"></div>
<div style="left:1326.2px;top:1037.0px;width:6.4px;height:6.4px;background:#05050c;border-radius:50%"></div>
<div style="left:818.0px;top:1093.1px;width:549.7px;height:77.5px;background:#7974a7;border-radius:11px"></div>
<svg style="left:830.2px;top:1112.4px;width:38.4px;height:38.4px;" viewBox="0 0 24 24" fill="none" stroke="#05050c" stroke-width="1.75" stroke-linecap="round" stroke-linejoin="round"><path d="M4.2 5.6c3.2-1.6 12.4-1.6 15.6 0l-1.1 10.2c-.4 3.2-3.6 5-6.7 5s-6.3-1.8-6.7-5z"/></svg>
<span class="t" style="left:878.4px;top:1118.9px;font:700 22.4px/30px 'Liberation Sans', sans-serif;color:#05050c;transform:scaleX(0.930);">Keyless</span>
<svg style="left:1310.2px;top:1113.8px;width:38.4px;height:38.4px;" viewBox="0 0 24 24" fill="none" stroke="#05050c" stroke-width="2.1" stroke-linecap="round" stroke-linejoin="round"><path d="M12 6.300v11.400M6.300 12h11.400"/></svg>
<div style="left:818.0px;top:1183.0px;width:549.7px;height:102.2px;border:1.6px solid #8e8f9b;border-radius:11px"></div>
<div style="left:836.0px;top:1216.1px;width:57.6px;height:35.5px;background:#999ba6;border-radius:18px"></div>
<span class="t" style="left:848.3px;top:1222.6px;font:400 19.2px/25px 'Liberation Sans', sans-serif;color:#0b0b14;letter-spacing:0.27px;transform:scaleX(0.930);">ALL</span>
<span class="t" style="left:900.5px;top:1219.1px;font:400 22.4px/30px 'Liberation Sans', sans-serif;color:#0b0b14;letter-spacing:4.79px;transform:scaleX(0.930);">//**</span>
<div style="left:1326.2px;top:1221.8px;width:6.4px;height:6.4px;background:#05050c;border-radius:50%"></div>
<div style="left:1326.2px;top:1231.4px;width:6.4px;height:6.4px;background:#05050c;border-radius:50%"></div>
<div style="left:1326.2px;top:1241.0px;width:6.4px;height:6.4px;background:#05050c;border-radius:50%"></div>
<div style="left:818.0px;top:1297.1px;width:549.7px;height:77.5px;background:#7974a7;border-radius:11px"></div>
<span class="t" style="left:832.6px;top:1321.5px;font:700 22.4px/30px 'Liberation Sans', sans-serif;color:#05050c;transform:scaleX(0.911);">Common flows</span>
<svg style="left:1310.2px;top:1317.8px;width:38.4px;height:38.4px;" viewBox="0 0 24 24" fill="none" stroke="#05050c" stroke-width="2.1" stroke-linecap="round" stroke-linejoin="round"><path d="M12 6.300v11.400M6.300 12h11.400"/></svg>
<div style="left:818.0px;top:1387.0px;width:549.7px;height:102.2px;border:1.6px solid #8e8f9b;border-radius:11px"></div>
<div style="left:836.0px;top:1443.3px;width:57.6px;height:35.5px;background:#999ba6;border-radius:18px"></div>
<span class="t" style="left:848.3px;top:1449.8px;font:400 19.2px/25px 'Liberation Sans', sans-serif;color:#0b0b14;letter-spacing:0.27px;transform:scaleX(0.930);">ALL</span>
<span class="t" style="left:900.5px;top:1446.3px;font:400 22.4px/30px 'Liberation Sans', sans-serif;color:#0b0b14;letter-spacing:4.79px;transform:scaleX(0.930);">//**</span>
<div style="left:1326.2px;top:1425.8px;width:6.4px;height:6.4px;background:#05050c;border-radius:50%"></div>
<div style="left:1326.2px;top:1435.4px;width:6.4px;height:6.4px;background:#05050c;border-radius:50%"></div>
<div style="left:1326.2px;top:1445.0px;width:6.4px;height:6.4px;background:#05050c;border-radius:50%"></div>
<span class="t" style="left:835.8px;top:1398.7px;font:400 22.4px/30px 'Liberation Sans', sans-serif;color:#0b0b14;letter-spacing:0.58px;transform:scaleX(0.930);">Incoming JSON payload request?</span>
<div style="left:1246.9px;top:1443.3px;width:50.1px;height:35.5px;background:#999ba6;border-radius:18px"></div>
<svg style="left:1261.0px;top:1450.1px;width:21.8px;height:21.8px;" viewBox="0 0 24 24" fill="none" stroke="#0b0b14" stroke-width="2.6" stroke-linecap="round" stroke-linejoin="round"><circle cx="12" cy="12" r="10.400"/><text x="5.600" y="15.400" font-family="Liberation Sans, sans-serif" font-size="9.500" font-weight="700" fill="#0b0b14" stroke="none" textLength="8.400" lengthAdjust="spacingAndGlyphs">IF</text><path d="M14.600 15.200h.100M16.500 15.200h.100M18.300 15.200h.050" stroke-width="1.600"/></svg>
<div style="left:1416.9px;top:378.4px;width:2360.9px;height:1300.0px;border:1.6px solid #8e8f9b;border-radius:12px;overflow:hidden"><div style="left:0;top:101.700px;width:2400px;height:1.600px;background:#8e8f9b"></div><div style="left:0;top:186.700px;width:2400px;height:1200px;background:#aaabb0;border-top:1.600px solid #8e8f9b"></div></div>
<span class="t" style="left:1441.9px;top:413.1px;font:700 25.6px/34px 'Liberation Sans', sans-serif;color:#05050c;letter-spacing:0.10px;transform:scaleX(0.930);">Flow details</span>
<span class="t" style="left:1442.0px;top:507.8px;font:400 22.4px/30px 'Liberation Sans', sans-serif;color:#14141f;letter-spacing:0.75px;transform:scaleX(0.930);">Path</span>
<span class="t" style="left:1500.8px;top:507.8px;font:700 22.4px/30px 'Liberation Sans', sans-serif;color:#05050c;transform:scaleX(0.930);">/</span>
<span class="t" style="left:1528.5px;top:507.8px;font:400 22.4px/30px 'Liberation Sans', sans-serif;color:#14141f;letter-spacing:0.62px;transform:scaleX(0.930);">Path Operator</span>
<div style="left:1673.2px;top:506.0px;width:150.4px;height:35.8px;background:#999ba6;border-radius:18px"></div>
<span class="t" style="left:1685.8px;top:512.8px;font:400 19.2px/25px 'Liberation Sans', sans-serif;color:#0b0b14;letter-spacing:0.09px;transform:scaleX(0.930);">STARTS_WITH</span>
<span class="t" style="left:1849.1px;top:507.8px;font:400 22.4px/30px 'Liberation Sans', sans-serif;color:#14141f;transform:scaleX(0.930);">HTTP methods</span>
<div style="left:1441.8px;top:590.8px;width:2310.0px;height:323.0px;border:1.6px solid #8e8f9b;border-radius:12px;background:#b2b2b2"></div>
<span class="t" style="left:1466.9px;top:616.9px;font:700 22.4px/30px 'Liberation Sans', sans-serif;color:#05050c;transform:scaleX(0.903);">Request phase</span>
<span class="t" style="left:1625.0px;top:616.9px;font:400 22.4px/30px 'Liberation Sans', sans-serif;color:#14141f;transform:scaleX(0.930);letter-spacing:1px;">Policies will be applied during the connection establishment</span>
<div style="left:1794.0px;top:684.3px;width:400.0px;height:37.3px;background:#999ba6;border-radius:19px"></div>
<svg style="left:1808.0px;top:693.1px;width:21.8px;height:21.8px;" viewBox="0 0 24 24" fill="none" stroke="#0b0b14" stroke-width="2.6" stroke-linecap="round" stroke-linejoin="round"><circle cx="12" cy="12" r="10.400"/><text x="5.600" y="15.400" font-family="Liberation Sans, sans-serif" font-size="9.500" font-weight="700" fill="#0b0b14" stroke="none" textLength="8.400" lengthAdjust="spacingAndGlyphs">IF</text><path d="M14.600 15.200h.100M16.500 15.200h.100M18.300 15.200h.050" stroke-width="1.600"/></svg>
<span class="t" style="left:1840.9px;top:690.9px;font:400 19.2px/25px 'Liberation Sans', sans-serif;color:#0b0b14;letter-spacing:0.94px;transform:scaleX(0.930);-webkit-text-stroke:.5px #0b0b14;">{#context.a</span>
<span class="t" style="left:1939.5px;top:690.9px;font:400 19.2px/25px 'Liberation Sans', sans-serif;color:#0b0b14;transform:scaleX(0.930);">ttributes['jwt.claims']['scope']</span>
<div style="left:1472.8px;top:761.8px;width:159.3px;height:38.3px;border:1.5px solid #2d22a0;border-radius:20px"></div>
<svg style="left:1486.1px;top:768.2px;width:25.6px;height:25.6px;" viewBox="0 0 24 24" fill="none" stroke="#05050c" stroke-width="2.4" stroke-linecap="round" stroke-linejoin="round"><circle cx="12" cy="12" r="9.200"/><path d="M2.800 12h18.400M12 2.800c-4.800 5-4.800 13.400 0 18.400M12 2.800c4.800 5 4.800 13.400 0 18.400"/></svg>
<span class="t" style="left:1516.5px;top:769.2px;font:400 19.2px/25px 'Liberation Sans', sans-serif;color:#0b0b14;letter-spacing:0.50px;transform:scaleX(0.930);">HTTP Proxy</span>
<svg style="left:1653.9px;top:772.6px;width:17.0px;height:17.0px;" viewBox="0 0 24 24" fill="none" stroke="#64656f" stroke-width="2.6" stroke-linecap="round" stroke-linejoin="round"><path d="M2 12h19M13 4l8 8-8 8"/></svg>
<svg style="left:1693.4px;top:761.9px;width:38.4px;height:38.4px;" viewBox="0 0 24 24" fill="none" stroke="#05050c" stroke-width="2.1" stroke-linecap="round" stroke-linejoin="round"><path d="M12 6.300v11.400M6.300 12h11.400"/></svg>
<svg style="left:1755.7px;top:772.6px;width:17.0px;height:17.0px;" viewBox="0 0 24 24" fill="none" stroke="#64656f" stroke-width="2.6" stroke-linecap="round" stroke-linejoin="round"><path d="M2 12h19M13 4l8 8-8 8"/></svg>
<div style="left:1788.2px;top:731.0px;width:500.0px;height:99.4px;border:1.6px solid #2a2090;border-radius:11px"></div>
<div style="left:1811.0px;top:766.8px;width:28.0px;height:28.0px;background:#2f7b81;border-radius:50%"></div>
<span class="t" style="left:1854.8px;top:766.5px;font:400 22.4px/30px 'Liberation Sans', sans-serif;color:#0b0b14;letter-spacing:0.22px;transform:scaleX(0.930);">Resourc</span>
<span class="t" style="left:1935.0px;top:766.5px;font:400 22.4px/30px 'Liberation Sans', sans-serif;color:#0b0b14;transform:scaleX(0.930);">e Filtering</span>
<svg style="left:1818.8px;top:774.2px;width:12.3px;height:14.0px;" viewBox="0 0 12.3 14" fill="none" stroke="#7dbcbd" stroke-width="1" stroke-linecap="round" stroke-linejoin="round"><path d="M.600 1.900 6.150.500 11.700 1.900V7c0 3.300-3 5.600-5.550 6.500C3.600 12.600.600 10.300.600 7z"/><path d="M3.200 4.800h5.900M3.200 7h5.900M4.300 9.300h3.700" stroke-width=".7" opacity=".7"/></svg>
<div style="left:1441.8px;top:937.8px;width:2310.0px;height:322.2px;border:1.6px solid #8e8f9b;border-radius:12px;background:#b2b2b2"></div>
<span class="t" style="left:1466.9px;top:962.8px;font:700 22.4px/30px 'Liberation Sans', sans-serif;color:#05050c;transform:scaleX(0.896);">Response phase</span>
<span class="t" style="left:1639.3px;top:962.8px;font:400 22.4px/30px 'Liberation Sans', sans-serif;color:#14141f;transform:scaleX(0.930);letter-spacing:1px;">Policies will be applied during the response</span>
<div style="left:1472.8px;top:1108.9px;width:159.3px;height:38.3px;border:1.5px solid #2d22a0;border-radius:20px"></div>
<svg style="left:1486.1px;top:1115.3px;width:25.6px;height:25.6px;" viewBox="0 0 24 24" fill="none" stroke="#05050c" stroke-width="2.4" stroke-linecap="round" stroke-linejoin="round"><circle cx="12" cy="12" r="9.200"/><path d="M2.800 12h18.400M12 2.800c-4.800 5-4.800 13.400 0 18.400M12 2.800c4.800 5 4.800 13.400 0 18.400"/></svg>
<span class="t" style="left:1516.5px;top:1116.3px;font:400 19.2px/25px 'Liberation Sans', sans-serif;color:#0b0b14;letter-spacing:0.50px;transform:scaleX(0.930);">HTTP Proxy</span>
<svg style="left:1653.9px;top:1119.4px;width:17.0px;height:17.0px;" viewBox="0 0 24 24" fill="none" stroke="#64656f" stroke-width="2.6" stroke-linecap="round" stroke-linejoin="round"><path d="M2 12h19M13 4l8 8-8 8"/></svg>
<svg style="left:1693.4px;top:1108.7px;width:38.4px;height:38.4px;" viewBox="0 0 24 24" fill="none" stroke="#05050c" stroke-width="2.1" stroke-linecap="round" stroke-linejoin="round"><path d="M12 6.300v11.400M6.300 12h11.400"/></svg>
<svg style="left:1755.7px;top:1119.4px;width:17.0px;height:17.0px;" viewBox="0 0 24 24" fill="none" stroke="#64656f" stroke-width="2.6" stroke-linecap="round" stroke-linejoin="round"><path d="M2 12h19M13 4l8 8-8 8"/></svg>
<div style="left:1794.0px;top:1108.9px;width:159.3px;height:38.3px;border:1.5px solid #2d22a0;border-radius:20px"></div>
<svg style="left:1807.3px;top:1115.3px;width:25.6px;height:25.6px;" viewBox="0 0 24 24" fill="none" stroke="#05050c" stroke-width="2.4" stroke-linecap="round" stroke-linejoin="round"><circle cx="12" cy="12" r="9.200"/><path d="M2.800 12h18.400M12 2.800c-4.800 5-4.800 13.400 0 18.400M12 2.800c4.800 5 4.800 13.400 0 18.400"/></svg>
<span class="t" style="left:1837.7px;top:1116.3px;font:400 19.2px/25px 'Liberation Sans', sans-serif;color:#0b0b14;letter-spacing:0.50px;transform:scaleX(0.930);">HTTP Proxy</span>
<div style="left:1933.0px;top:148.0px;width:3.8px;height:128.0px;background:#a1a1a6"></div>
<div style="left:1933.0px;top:275.9px;width:3.8px;height:1310.0px;background:#9d9d9f"></div>
<div style="left:1933.0px;top:415.1px;width:3.8px;height:77.6px;background:#7974a7"></div>
<div style="left:1933.0px;top:619.1px;width:3.8px;height:77.6px;background:#7974a7"></div>
<div style="left:1933.0px;top:823.1px;width:3.8px;height:77.6px;background:#7974a7"></div>
<div style="left:1933.0px;top:1027.1px;width:3.8px;height:77.6px;background:#7974a7"></div>
<div style="left:1933.0px;top:1231.1px;width:3.8px;height:77.6px;background:#7974a7"></div>
<div style="left:1933.0px;top:1435.1px;width:3.8px;height:77.6px;background:#7974a7"></div>
<div style="left:1933.0px;top:709.3px;width:3.8px;height:2.8px;background:#3a2fa0"></div>
<div style="left:1933.0px;top:807.9px;width:3.8px;height:2.8px;background:#3a2fa0"></div>
<div style="left:1936.7px;top:146.0px;width:1860.3px;height:1397.8px;background:#fff;border-radius:6.400px;box-shadow:0 11px 15px -7px rgba(0,0,0,.22),0 4px 10px rgba(0,0,0,.05)"></div>
<div style="left:1977.2px;top:179.0px;width:27.9px;height:27.9px;background:#7fbac6;border-radius:50%"></div>
<svg style="left:1984.8px;top:186.0px;width:12.3px;height:14.0px;" viewBox="0 0 12.3 14" fill="none" stroke="#e3f2f5" stroke-width="1" stroke-linecap="round" stroke-linejoin="round"><path d="M.600 1.900 6.150.500 11.700 1.900V7c0 3.300-3 5.600-5.550 6.500C3.600 12.600.600 10.300.600 7z"/><path d="M3.200 4.800h5.900M3.200 7h3M7.800 7h1.300M4.300 9.300h3.700M6.150 8.500v1.800" stroke-width=".7" opacity=".75"/></svg>
<span class="t" style="left:2031.2px;top:167.7px;font:700 38.4px/50px 'Liberation Sans', sans-serif;color:#26283a;transform:scaleX(0.946);">Resource Filtering</span>
<span class="t" style="left:1973.1px;top:219.0px;font:400 19.2px/25px 'Liberation Sans', sans-serif;color:#5b5d6c;letter-spacing:0.09px;transform:scaleX(0.930);">Filter access to specific resources determined by a path and a method</span>
<svg style="left:3750.4px;top:171.1px;width:21.3px;height:21.6px;" viewBox="0 0 21.3 21.6" fill="none" stroke="#24253a" stroke-width="2.7" stroke-linecap="round" stroke-linejoin="round"><path d="M1 1 20.300 20.600M20.300 1 1 20.600"/></svg>
<div style="left:1973.6px;top:281.3px;width:1757.4px;height:1183.6px;border:1.6px solid #d3d4df;border-bottom:none;border-radius:12px 12px 0 0"></div>
<div style="left:1973.6px;top:359.5px;width:1757.4px;height:1.6px;background:#d3d4df"></div>
<div style="left:2850.6px;top:281.3px;width:1.6px;height:1183.6px;background:#d3d4df"></div>
<span class="t" style="left:1997.6px;top:306.7px;font:700 22.4px/30px 'Liberation Sans', sans-serif;color:#6c6d7a;letter-spacing:0.21px;transform:scaleX(0.930);">Settings</span>
<span class="t" style="left:2876.0px;top:307.2px;font:700 22.4px/30px 'Liberation Sans', sans-serif;color:#7b7c89;transform:scaleX(0.916);">Documentation</span>
<div style="left:3767.4px;top:281.0px;width:29.4px;height:1183.9px;background:#f8f8f8;border-left:1.6px solid #e4e4e4"></div>
<div style="left:3775.1px;top:287.0px;width:15.9px;height:377.6px;background:#c1c1c1;border-radius:8px"></div>
<div style="left:1998.5px;top:394.3px;width:828.0px;height:107.0px;border:3.2px solid #1d8f8c;border-radius:7px"></div>
<div style="left:2015.6px;top:393.3px;width:99.6px;height:5.0px;background:#fff"></div>
<span class="t" style="left:2021.8px;top:383.6px;font:700 16.8px/22px 'Liberation Sans', sans-serif;color:#2a9a96;transform:scaleX(0.930);">Description</span>
<div style="left:2022.2px;top:419.5px;width:2.0px;height:25.0px;background:#1d8f8c"></div>
<svg style="left:2787.0px;top:466.0px;width:14.0px;height:14.0px;" viewBox="0 0 14 14" fill="none" stroke="#33343f" stroke-width="1.3" stroke-linecap="round" stroke-linejoin="round"><path d="M0 13.500 13.500 0M7.500 13 13 7.500"/></svg>
<span class="t" style="left:2022.0px;top:507.6px;font:400 19.2px/25px 'Liberation Sans', sans-serif;color:#6c6d7a;letter-spacing:0.22px;transform:scaleX(0.930);">Describe how your policy works.</span>
<div style="left:1998.5px;top:549.9px;width:828.0px;height:77.7px;border:1.6px solid #8a8b96;border-radius:7px"></div>
<div style="left:2015.6px;top:548.9px;width:140.7px;height:5.0px;background:#fff"></div>
<span class="t" style="left:2021.8px;top:539.2px;font:700 16.8px/22px 'Liberation Sans', sans-serif;color:#6c6d7a;letter-spacing:0.04px;transform:scaleX(0.930);">Trigger condition</span>
<span class="t" style="left:2021.6px;top:572.9px;font:400 22.4px/30px 'Liberation Sans', sans-serif;color:#2a2b3c;letter-spacing:1.14px;transform:scaleX(0.930);-webkit-text-stroke:.45px #2a2b3c;">{#context.attributes['jwt.claims']['scope'].contains('getInventory') == false}</span>
<span class="t" style="left:2022.0px;top:633.3px;font:400 19.2px/25px 'Liberation Sans', sans-serif;color:#6c6d7a;letter-spacing:0.10px;transform:scaleX(0.930);">The condition to execute this policy. Supports Expression Language.</span>
<div style="left:1998.5px;top:666.4px;width:828.0px;height:697.0px;border:1.6px solid #d3d4df;border-radius:12px"></div>
<div style="left:2011.2px;top:679.5px;width:802.6px;height:150.6px;border:1.6px solid #d3d4df;border-radius:12px"></div>
<span class="t" style="left:2023.7px;top:694.0px;font:700 22.4px/30px 'Liberation Sans', sans-serif;color:#6c6d7a;letter-spacing:0.49px;transform:scaleX(0.930);">Whitelist</span>
<svg style="left:2754.9px;top:722.2px;width:20.8px;height:11.2px;" viewBox="0 0 20.8 11.2" fill="none" stroke="#6c6d7a" stroke-width="2.9" stroke-linecap="round" stroke-linejoin="round"><path d="M1.500 1.500 10.400 9.800 19.300 1.500"/></svg>
<div style="left:2024.3px;top:764.4px;width:116.4px;height:53.0px;border:1.6px solid #e2e3ea;border-radius:7px"></div>
<svg style="left:2046.7px;top:782.9px;width:17.8px;height:17.8px;" viewBox="0 0 24 24" fill="none" stroke="#1a1b2e" stroke-width="3" stroke-linecap="round" stroke-linejoin="round"><path d="M12 1v22M1 12h22"/></svg>
<span class="t" style="left:2080.8px;top:779.3px;font:700 20px/26px 'Liberation Sans', sans-serif;color:#1a1b2e;letter-spacing:0.12px;transform:scaleX(0.930);">Add</span>
<div style="left:2011.2px;top:843.2px;width:802.6px;height:507.0px;border:1.6px solid #d3d4df;border-radius:12px"></div>
<span class="t" style="left:2024.0px;top:857.7px;font:700 22.4px/30px 'Liberation Sans', sans-serif;color:#6c6d7a;letter-spacing:0.31px;transform:scaleX(0.930);">Blacklist</span>
<svg style="left:2754.9px;top:886.6px;width:20.8px;height:11.2px;" viewBox="0 0 20.8 11.2" fill="none" stroke="#6c6d7a" stroke-width="2.9" stroke-linecap="round" stroke-linejoin="round"><path d="M1.500 1.500 10.400 9.800 19.300 1.500"/></svg>
<span class="t" style="left:2023.8px;top:929.5px;font:700 27px/36px 'Liberation Sans', sans-serif;color:#6c6d7a;letter-spacing:0.61px;transform:scaleX(0.930);">Rule</span>
<div style="left:2024.3px;top:988.6px;width:705.0px;height:288.8px;border:1.6px solid #d3d4df;border-radius:12px"></div>
<div style="left:2037.1px;top:1011.3px;width:679.0px;height:77.2px;border:1.6px solid #8a8b96;border-radius:7px"></div>
<div style="left:2054.5px;top:1010.3px;width:117.4px;height:5.0px;background:#fff"></div>
<span class="t" style="left:2060.4px;top:1000.6px;font:700 16.8px/22px 'Liberation Sans', sans-serif;color:#6c6d7a;letter-spacing:0.21px;transform:scaleX(0.930);">Path pattern *</span>
<span class="t" style="left:2061.4px;top:1035.1px;font:400 22.4px/30px 'Liberation Sans', sans-serif;color:#2e2f3d;letter-spacing:4.27px;transform:scaleX(0.930);-webkit-text-stroke:.6px #2e2f3d;">/**</span>
<span class="t" style="left:2060.9px;top:1094.3px;font:400 19.2px/25px 'Liberation Sans', sans-serif;color:#6c6d7a;letter-spacing:0.37px;transform:scaleX(0.930);">Ant-style path patterns</span>
<div style="left:2037.1px;top:1149.1px;width:679.0px;height:76.9px;border:1.6px solid #8a8b96;border-radius:7px"></div>
<div style="left:2054.5px;top:1148.1px;width:76.6px;height:5.0px;background:#fff"></div>
<span class="t" style="left:2060.4px;top:1138.4px;font:700 16.8px/22px 'Liberation Sans', sans-serif;color:#6c6d7a;transform:scaleX(0.925);">Methods</span>
<span class="t" style="left:2060.8px;top:1174.8px;font:400 21.5px/28px 'Liberation Sans', sans-serif;color:#2e2f3d;letter-spacing:0.47px;transform:scaleX(0.930);-webkit-text-stroke:.6px #2e2f3d;">CONNECT, DELETE, GET, HEAD, OPTIONS, PATCH, POST, P...</span>
<div style="left:2676.600px;top:1184.600px;width:0;height:0;border-left:7.900px solid transparent;border-right:7.900px solid transparent;border-top:7.900px solid #7a7b85"></div>
<span class="t" style="left:2060.9px;top:1232.8px;font:400 19.2px/25px 'Liberation Sans', sans-serif;color:#6c6d7a;transform:scaleX(0.920);">HTTP Methods</span>
<svg style="left:2753.5px;top:1092.0px;width:21.5px;height:21.5px;" viewBox="0 0 21.5 21.5" fill="none" stroke="#5f6070" stroke-width="2.4" stroke-linecap="round" stroke-linejoin="round"><path d="M0 0 21.500 21.500M21.500 0 0 21.500"/></svg>
<div style="left:2024.3px;top:1284.5px;width:116.4px;height:53.0px;border:1.6px solid #e2e3ea;border-radius:7px"></div>
<svg style="left:2046.7px;top:1303.0px;width:17.8px;height:17.8px;" viewBox="0 0 24 24" fill="none" stroke="#1a1b2e" stroke-width="3" stroke-linecap="round" stroke-linejoin="round"><path d="M12 1v22M1 12h22"/></svg>
<span class="t" style="left:2080.8px;top:1299.4px;font:700 20px/26px 'Liberation Sans', sans-serif;color:#1a1b2e;letter-spacing:0.12px;transform:scaleX(0.930);">Add</span>
<span class="t" style="left:2875.4px;top:389.4px;font:700 48px/63px 'Liberation Sans', sans-serif;color:#14152a;transform:scaleX(0.988);">Resource filtering policy</span>
<span class="t" style="left:2876.1px;top:495.3px;font:700 35.82px/47px 'Liberation Sans', sans-serif;color:#14152a;">Phase</span>
<div style="left:2876.6px;top:563.5px;width:828.7px;height:115.6px;border:1.6px solid #d8d8d8"></div>
<div style="left:2878.2px;top:565.1px;width:825.5px;height:56.5px;background:#f7f7f7;border-bottom:1.6px solid #d8d8d8"></div>
<div style="left:3267.4px;top:563.5px;width:1.6px;height:115.6px;background:#d8d8d8"></div>
<span class="t" style="left:2889.7px;top:577.6px;font:700 20.8px/28px 'Liberation Sans', sans-serif;color:#2c2d33;letter-spacing:0.66px;transform:scaleX(0.930);">onRequest</span>
<span class="t" style="left:3281.9px;top:577.6px;font:700 20.8px/28px 'Liberation Sans', sans-serif;color:#2c2d33;letter-spacing:0.40px;transform:scaleX(0.930);">onResponse</span>
<span class="t" style="left:3064.5px;top:636.6px;font:400 20.8px/28px 'Liberation Sans', sans-serif;color:#2c2d33;transform:scaleX(0.930);">X</span>
<div style="left:2876.6px;top:731.1px;width:828.7px;height:1.6px;background:#e2e2e6"></div>
<span class="t" style="left:2874.8px;top:775.8px;font:700 36.77px/48px 'Liberation Sans', sans-serif;color:#14152a;">Description</span>
<span class="t" style="left:2876.2px;top:847.7px;font:400 22.4px/30px 'Liberation Sans', sans-serif;color:#767784;letter-spacing:0.41px;transform:scaleX(0.930);">You can use the</span>
<div style="left:3037.4px;top:850.3px;width:223.2px;height:26.2px;background:#f4f4f5;border-radius:5px"></div>
<span class="t" style="left:3043.5px;top:851.8px;font:400 19.4px/26px 'Liberation Mono', monospace;color:#2a2a2e;letter-spacing:0.12px;">resource-filtering</span>
<span class="t" style="left:3266.9px;top:847.7px;font:400 22.4px/30px 'Liberation Sans', sans-serif;color:#767784;letter-spacing:0.86px;transform:scaleX(0.930);">policy to filter REST resources. By applying</span>
<span class="t" style="left:2876.2px;top:880.5px;font:400 22.4px/30px 'Liberation Sans', sans-serif;color:#767784;letter-spacing:0.90px;transform:scaleX(0.930);">this filter, you can restrict or allow access to a specific resource determined by a</span>
<span class="t" style="left:2876.2px;top:913.5px;font:400 22.4px/30px 'Liberation Sans', sans-serif;color:#767784;letter-spacing:0.68px;transform:scaleX(0.930);">path and a method (or an array of methods).</span>
<span class="t" style="left:2876.2px;top:976.9px;font:400 22.4px/30px 'Liberation Sans', sans-serif;color:#767784;letter-spacing:0.94px;transform:scaleX(0.930);">This policy is mainly used in plan configuration, to limit subscriber access to</span>
<span class="t" style="left:2876.2px;top:1009.7px;font:400 22.4px/30px 'Liberation Sans', sans-serif;color:#767784;letter-spacing:0.95px;transform:scaleX(0.930);">specific resources only.</span>
<span class="t" style="left:2876.2px;top:1072.5px;font:400 22.4px/30px 'Liberation Sans', sans-serif;color:#767784;letter-spacing:0.80px;transform:scaleX(0.930);">A typical usage would be to allow access to all paths (</span>
<div style="left:3414.1px;top:1075.1px;width:45.1px;height:26.2px;background:#f4f4f5;border-radius:5px"></div>
<span class="t" style="left:3419.5px;top:1076.6px;font:400 19.4px/26px 'Liberation Mono', monospace;color:#2a2a2e;letter-spacing:0.57px;">/**</span>
<span class="t" style="left:3461.4px;top:1072.5px;font:400 22.4px/30px 'Liberation Sans', sans-serif;color:#767784;letter-spacing:0.73px;transform:scaleX(0.930);">) but in read-only mode</span>
<span class="t" style="left:2876.2px;top:1105.4px;font:400 22.4px/30px 'Liberation Sans', sans-serif;color:#767784;letter-spacing:0.46px;transform:scaleX(0.930);">(GET method).</span>
<span class="t" style="left:2888.9px;top:1196.7px;font:700 22.4px/30px 'Liberation Sans', sans-serif;color:#14152a;letter-spacing:0.88px;transform:scaleX(0.930);">WARNING</span>
<div style="left:3007.5px;top:1167.3px;width:1.6px;height:90.5px;background:#dcdce2"></div>
<span class="t" style="left:3031.7px;top:1181.8px;font:400 20.8px/28px 'Liberation Sans', sans-serif;color:#5f6068;letter-spacing:0.79px;transform:scaleX(0.930);-webkit-text-stroke:.5px #5f6068;">You can’t apply whitelisting and blacklisting to the same resource.</span>
<span class="t" style="left:3031.7px;top:1215.1px;font:400 20.8px/28px 'Liberation Sans', sans-serif;color:#5f6068;letter-spacing:0.84px;transform:scaleX(0.930);-webkit-text-stroke:.5px #5f6068;">Whitelisting takes precedence over blacklisting.</span>
<div style="left:2876.6px;top:1309.9px;width:828.7px;height:1.6px;background:#e2e2e6"></div>
<span class="t" style="left:2874.8px;top:1353.1px;font:700 37.18px/49px 'Liberation Sans', sans-serif;color:#14152a;">Compatibility with APIM</span>
<div style="left:2876.2px;top:1424.3px;width:829.7px;height:60.0px;border:1.6px solid #d8d8d8"></div>
<div style="left:3210.6px;top:1424.3px;width:1.6px;height:60.0px;background:#d8d8d8"></div>
<span class="t" style="left:2889.7px;top:1438.3px;font:400 22.4px/30px 'Liberation Sans', sans-serif;color:#2c2d33;letter-spacing:0.96px;transform:scaleX(0.930);">Plugin version</span>
<span class="t" style="left:3224.1px;top:1438.3px;font:400 22.4px/30px 'Liberation Sans', sans-serif;color:#2c2d33;letter-spacing:0.86px;transform:scaleX(0.930);">APIM version</span>
<div style="left:1938.0px;top:1464.9px;width:1857.0px;height:78.0px;background:#fff;border-radius:0 0 6.400px 6.400px"></div>
<span class="t" style="left:3597.3px;top:1490.8px;font:400 21px/28px 'Liberation Sans', sans-serif;color:#14152a;letter-spacing:0.49px;transform:scaleX(0.930);-webkit-text-stroke:.5px #14152a;">Cancel</span>
<div style="left:3689.1px;top:1478.1px;width:95.9px;height:53.8px;background:#1a8f8c;border-radius:6.400px"></div>
<span class="t" style="left:3714.3px;top:1490.8px;font:400 21px/28px 'Liberation Sans', sans-serif;color:#fff;letter-spacing:0.19px;transform:scaleX(0.930);-webkit-text-stroke:.5px #fff;">Save</span>
</body></html>
